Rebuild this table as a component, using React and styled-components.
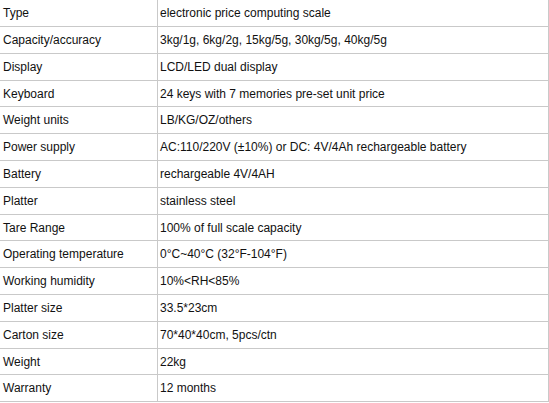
import React from 'react';
import styled, {createGlobalStyle} from 'styled-components';

const GlobalStyle = createGlobalStyle`
  html, body {
    margin: 0;
    padding: 0;
    background: #ffffff;
  }
`;

const Table = styled.div`
  display: grid;
  grid-template-columns: 158px 391px;
  width: 549px;
  font-family: "Liberation Sans", Arial, sans-serif;
  font-size: 12px;
  color: #111111;
  background: #ffffff;
`;

const Cell = styled.div`
  box-sizing: border-box;
  height: ${props => props.$h}px;
  display: flex;
  align-items: center;
  padding-left: ${props => props.$value ? 2 : 3}px;
  border-bottom: 1px solid #c9c9c9;
  border-right: 1px solid #c9c9c9;
  white-space: nowrap;
`;

const specs = [
    ['Type', 'electronic price computing scale'],
    ['Capacity/accuracy', '3kg/1g, 6kg/2g, 15kg/5g, 30kg/5g, 40kg/5g'],
    ['Display', 'LCD/LED dual display'],
    ['Keyboard', '24 keys with 7 memories pre-set unit price'],
    ['Weight units', 'LB/KG/OZ/others'],
    ['Power supply', 'AC:110/220V (±10%) or DC: 4V/4Ah rechargeable battery'],
    ['Battery', 'rechargeable 4V/4AH'],
    ['Platter', 'stainless steel'],
    ['Tare Range', '100% of full scale capacity'],
    ['Operating temperature', '0°C~40°C (32°F-104°F)'],
    ['Working humidity', '10%<RH<85%'],
    ['Platter size', '33.5*23cm'],
    ['Carton size', '70*40*40cm, 5pcs/ctn'],
    ['Weight', '22kg'],
    ['Warranty', '12 months'],
];

// row bottoms sit at 26.8px steps, first one at y=27
const rowHeight = (i) => Math.round(27 + 26.8 * i) - (i === 0 ? 0 : Math.round(27 + 26.8 * (i - 1)));

export default function App() {
    return (
        <>
            <GlobalStyle/>
            <Table>
                {specs.map(([label, value], i) => (
                    <React.Fragment key={label}>
                        <Cell $h={rowHeight(i)}>{label}</Cell>
                        <Cell $value $h={rowHeight(i)}>{value}</Cell>
                    </React.Fragment>
                ))}
            </Table>
        </>
    );
}
